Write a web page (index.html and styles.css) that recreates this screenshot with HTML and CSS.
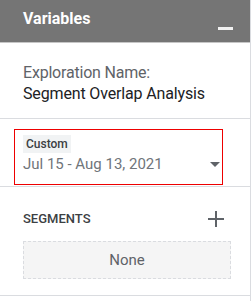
FILE: index.html
```html
<!DOCTYPE html>
<html>
<head>
<meta charset="utf-8">
<link rel="stylesheet" href="styles.css">
</head>
<body>
<div class="panel">
  <div class="header">
    <span class="title">Variables</span>
    <span class="minimize"></span>
  </div>
  <div class="section name-section">
    <div class="label">Exploration Name:</div>
    <div class="value">Segment Overlap Analysis</div>
  </div>
  <div class="section date-section">
    <div class="date-box">
      <span class="chip">Custom</span>
      <div class="date-row">
        <span class="date">Jul 15 - Aug 13, 2021</span>
        <svg class="arrow" width="10" height="5" viewBox="0 0 10 5"><path d="M0 0 L10 0 L5 5 Z" fill="#5f6368"/></svg>
      </div>
    </div>
  </div>
  <div class="section seg-section">
    <div class="seg-head">
      <span class="seg-title">SEGMENTS</span>
      <svg class="plus" width="16" height="16" viewBox="0 0 16 16"><path d="M8 0 V16 M0 8 H16" stroke="#5f6368" stroke-width="2"/></svg>
    </div>
    <div class="none-box">None</div>
  </div>
</div>
</body>
</html>
```
FILE: styles.css
```css
body {
  margin: 0;
  background: #fff;
  font-family: Roboto, "Liberation Sans", sans-serif;
}
.panel {
  width: 250px;
  border-right: 1px solid #dadce0;
  min-height: 301px;
  box-sizing: content-box;
}
.header {
  height: 42px;
  background: #757575;
  border-bottom: 1px solid #c6c6c6;
  display: flex;
  justify-content: space-between;
  padding: 0 17px 0 23px;
  box-sizing: content-box;
}
.title {
  color: #fff;
  font-weight: 700;
  font-size: 16px;
  line-height: 16px;
  margin-top: 11px;
}
.minimize {
  width: 15px;
  height: 3px;
  background: #f1f1f1;
  margin-top: 27px;
}
.section {
  border-bottom: 1px solid #dadce0;
}
.name-section {
  padding: 19px 0 14px 23px;
}
.label {
  font-size: 16px;
  line-height: 21px;
  letter-spacing: -0.2px;
  color: #5f6368;
}
.value {
  font-size: 16px;
  line-height: 21px;
  letter-spacing: -0.15px;
  color: #202124;
}
.date-section {
  padding: 10px 0 1px 14px;
}
.date-box {
  width: 209px;
  box-sizing: border-box;
  border: 1px solid #ee0000;
  padding: 5px 2px 10px 8px;
}
.chip {
  display: inline-block;
  background: #f1f3f4;
  color: #3c4043;
  font-size: 12px;
  font-weight: 500;
  line-height: 18px;
  height: 18px;
  padding: 0 3px;
  vertical-align: top;
}
.date-row {
  display: flex;
  justify-content: space-between;
  align-items: center;
  height: 20px;
}
.date {
  font-size: 15px;
  line-height: 21px;
  color: #70757a;
}
.arrow {
  display: block;
}
.seg-section {
  padding: 24px 26px 16px 23px;
}
.seg-head {
  display: flex;
  justify-content: space-between;
  align-items: center;
  height: 16px;
}
.seg-title {
  font-size: 13px;
  font-weight: 500;
  line-height: 16px;
  color: #3c4043;
}
.plus {
  display: block;
}
.none-box {
  margin-top: 14px;
  width: 208px;
  height: 38px;
  box-sizing: border-box;
  border: 1px dashed #dadce0;
  background: #f5f5f5;
  color: #5f6368;
  font-size: 15px;
  display: flex;
  align-items: center;
  justify-content: center;
}
```
